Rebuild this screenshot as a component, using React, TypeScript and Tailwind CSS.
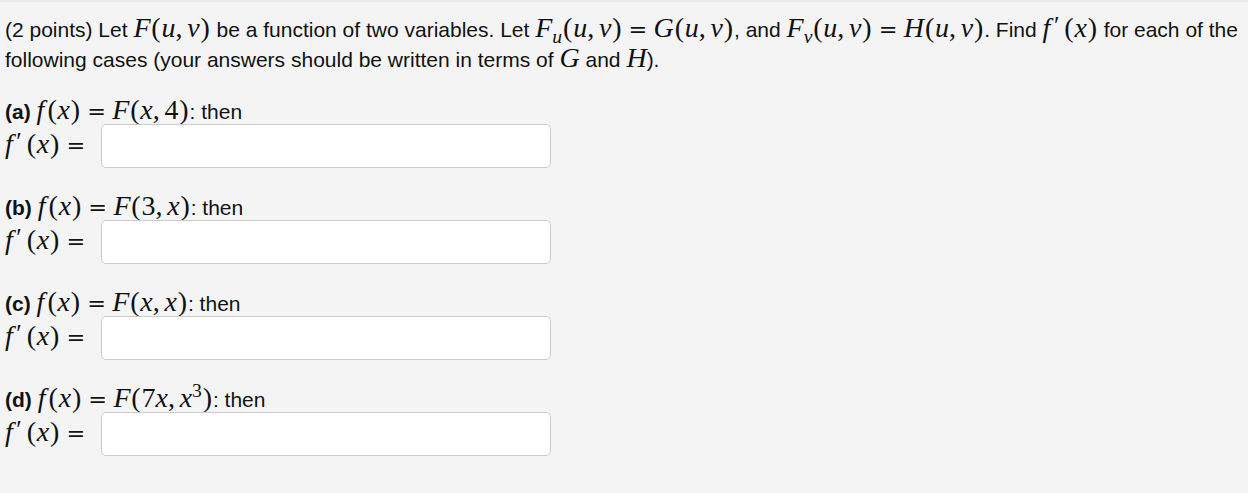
import React from 'react';

type Kids = { children: React.ReactNode };

const V = ({ children }: Kids) => <i className="italic">{children}</i>;

const Fi = () => <i className="italic mr-[0.08em]">f</i>;

const L = () => <span className="mx-[0.03em]">(</span>;
const R = () => <span className="mx-[0.03em]">)</span>;

const Comma = () => <span className="mr-[0.17em]">,</span>;

const Eq = () => (
  <span className="mx-[0.28em] font-['DejaVu_Serif',serif] text-[0.8em]">=</span>
);

const Prime = () => (
  <span className="relative -top-[0.12em] text-[0.9em] ml-[0.14em] mr-[0.16em]">′</span>
);

const Sub = ({ children }: Kids) => (
  <i className="relative top-[0.3em] text-[0.7em] italic">{children}</i>
);

const Sup = ({ children }: Kids) => (
  <span className="relative -top-[0.5em] text-[0.7em]">{children}</span>
);

const M = ({ children }: Kids) => (
  <span className="font-['Liberation_Serif',serif] text-[28px] leading-none whitespace-nowrap">
    {children}
  </span>
);

const FX = () => (
  <>
    <Fi />
    <L />
    <V>x</V>
    <R />
  </>
);

const FPrime = () => (
  <>
    <i className="italic">f</i>
    <Prime />
    <L />
    <V>x</V>
    <R />
  </>
);

const Case = ({ tag, rhs }: { tag: string; rhs: React.ReactNode }) => (
  <div className="mb-[24px]">
    <div className="h-[28px] leading-[28px]">
      <b>({tag})</b>{' '}
      <M>
        <FX />
        <Eq />
        {rhs}
      </M>
      : then
    </div>
    <div className="flex items-center h-[44px]">
      <div className="w-[96px]">
        <M>
          <FPrime />
          <Eq />
        </M>
      </div>
      <div className="w-[450px] h-[44px] rounded-[5px] border border-[#cccccc] bg-white" />
    </div>
  </div>
);

const UV = () => (
  <>
    <L />
    <V>u</V>
    <Comma />
    <V>v</V>
    <R />
  </>
);

export default function App() {
  return (
    <div className="min-h-[493px] w-[1248px] bg-[#f4f4f4] border-t-2 border-[#ebebeb] font-['Liberation_Sans',Arial,sans-serif] text-[21px] text-[#111] pl-[5px] pt-[12px]">
      <div className="leading-[29px] whitespace-nowrap">
        (2 points) Let{' '}
        <M>
          <V>F</V>
          <UV />
        </M>{' '}
        be a function of two variables. Let{' '}
        <M>
          <V>F</V>
          <Sub>u</Sub>
          <UV />
          <Eq />
          <V>G</V>
          <UV />
        </M>
        , and{' '}
        <M>
          <V>F</V>
          <Sub>v</Sub>
          <UV />
          <Eq />
          <V>H</V>
          <UV />
        </M>
        . Find{' '}
        <M>
          <FPrime />
        </M>{' '}
        for each of the
        <br />
        following cases (your answers should be written in terms of{' '}
        <M>
          <V>G</V>
        </M>{' '}
        and{' '}
        <M>
          <V>H</V>
        </M>
        ).
      </div>
      <div className="mt-[22px]">
        <Case
          tag="a"
          rhs={
            <>
              <V>F</V>
              <L />
              <V>x</V>
              <Comma />4<R />
            </>
          }
        />
        <Case
          tag="b"
          rhs={
            <>
              <V>F</V>
              <L />3<Comma />
              <V>x</V>
              <R />
            </>
          }
        />
        <Case
          tag="c"
          rhs={
            <>
              <V>F</V>
              <L />
              <V>x</V>
              <Comma />
              <V>x</V>
              <R />
            </>
          }
        />
        <Case
          tag="d"
          rhs={
            <>
              <V>F</V>
              <L />7<V>x</V>
              <Comma />
              <V>x</V>
              <Sup>3</Sup>
              <R />
            </>
          }
        />
      </div>
    </div>
  );
}
